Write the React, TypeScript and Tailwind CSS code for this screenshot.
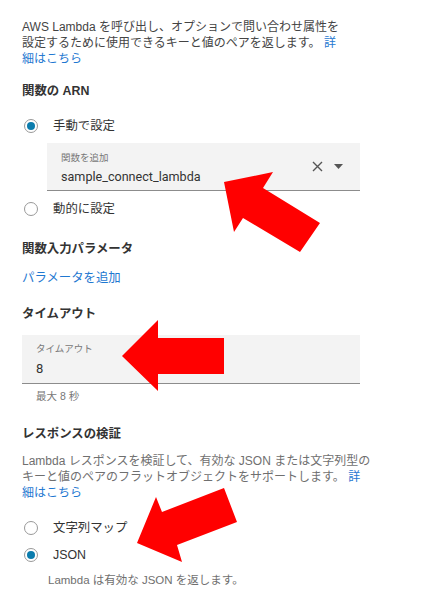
import React from "react";

const font = {
  fontFamily: '"Liberation Sans", "Noto Sans CJK JP", sans-serif',
};

const valueFont = { fontFamily: 'Roboto, "Noto Sans CJK JP", sans-serif' };

function Radio({ checked, label }: { checked?: boolean; label: string }) {
  return (
    <div className="flex h-[20px] items-center">
      <span className="ml-[2px] flex h-[14px] w-[14px] items-center justify-center rounded-full border border-[#999] bg-white">
        {checked && <span className="h-[8px] w-[8px] rounded-full bg-[#0b7cad]" />}
      </span>
      <span className="ml-[15px] text-[12.4px] text-[#333]">{label}</span>
    </div>
  );
}

function Arrows() {
  return (
    <svg
      className="pointer-events-none absolute left-0 top-0"
      width="431"
      height="613"
      viewBox="0 0 431 613"
    >
      <polygon
        fill="#ff0000"
        points="224,182 273,172 263,188 320,223 300,252 243,218 234,232"
      />
      <polygon
        fill="#ff0000"
        points="122,356 158,320 158,338 224,338 224,374 158,374 158,391"
      />
      <polygon
        fill="#ff0000"
        points="137,543 156,497 162,512 224,488 237,522 177,545 182,562"
      />
    </svg>
  );
}

export default function App() {
  return (
    <div className="relative h-[613px] w-[431px] overflow-hidden bg-white" style={font}>
      <div className="flex flex-col px-[22px] pt-[19px]">
        <p className="text-[12px] leading-[16px] text-[#444]">
          AWS Lambda を呼び出し、オプションで問い合わせ属性を
          <br />
          設定するために使用できるキーと値のペアを返します。
          <span className="text-[#1f78d1]">
            {" "}詳
            <br />
            細はこちら
          </span>
        </p>

        <h3 className="mt-[16px] text-[12.4px] font-bold leading-[16px] text-[#333]">関数の ARN</h3>

        <div className="mt-[17px]">
          <Radio checked label="手動で設定" />
        </div>

        <div className="ml-[25px] mr-[49px] mt-[7px] flex h-[48px] border-b border-[#8c8c8c] bg-[#f3f3f3] pl-[14px] pr-[17px]">
          <div className="flex flex-1 flex-col pt-[9px]">
            <span className="text-[9.5px] leading-[12px] text-[#777]">関数を追加</span>
            <span className="mt-[4px] text-[12.6px] leading-[18px] text-[#333]" style={valueFont}>
              sample_connect_lambda
            </span>
          </div>
          <div className="flex items-center gap-[11px] pb-[1px]">
            <svg width="11" height="11" viewBox="0 0 11 11">
              <path d="M1 1 L10 10 M10 1 L1 10" stroke="#555" strokeWidth="1.4" />
            </svg>
            <svg width="9" height="5" viewBox="0 0 9 5">
              <polygon points="0,0 9,0 4.5,5" fill="#555" />
            </svg>
          </div>
        </div>

        <div className="mt-[8px]">
          <Radio label="動的に設定" />
        </div>

        <h3 className="mt-[22px] text-[12.4px] font-bold leading-[16px] text-[#333]">関数入力パラメータ</h3>

        <span className="mt-[13px] text-[12.4px] leading-[16px] text-[#1f78d1]">パラメータを追加</span>

        <h3 className="mt-[20px] text-[12.4px] font-bold leading-[16px] text-[#333]">タイムアウト</h3>

        <div className="mr-[49px] mt-[13px] flex h-[49px] flex-col border-b border-[#8c8c8c] bg-[#f3f3f3] pl-[14px] pt-[8px]">
          <span className="text-[9.5px] leading-[12px] text-[#777]">タイムアウト</span>
          <span className="mt-[5px] text-[13px] leading-[18px] text-[#333]" style={valueFont}>
            8
          </span>
        </div>
        <span className="mt-[5px] pl-[14px] text-[10.5px] leading-[14px] text-[#777]">最大 8 秒</span>

        <h3 className="mt-[23px] text-[12.4px] font-bold leading-[16px] text-[#333]">レスポンスの検証</h3>

        <p className="mt-[11px] text-[12px] leading-[16px] text-[#6f6f6f]">
          Lambda レスポンスを検証して、有効な JSON または文字列型の
          <br />
          キーと値のペアのフラットオブジェクトをサポートします。
          <span className="text-[#1f78d1]">
            {" "}詳
            <br />
            細はこちら
          </span>
        </p>

        <div className="mt-[17px]">
          <Radio label="文字列マップ" />
        </div>
        <div className="mt-[7px]">
          <Radio checked label="JSON" />
        </div>
        <span className="mt-[8px] pl-[26px] text-[11.5px] leading-[14px] text-[#6f6f6f]">
          Lambda は有効な JSON を返します。
        </span>
      </div>
      <Arrows />
    </div>
  );
}
